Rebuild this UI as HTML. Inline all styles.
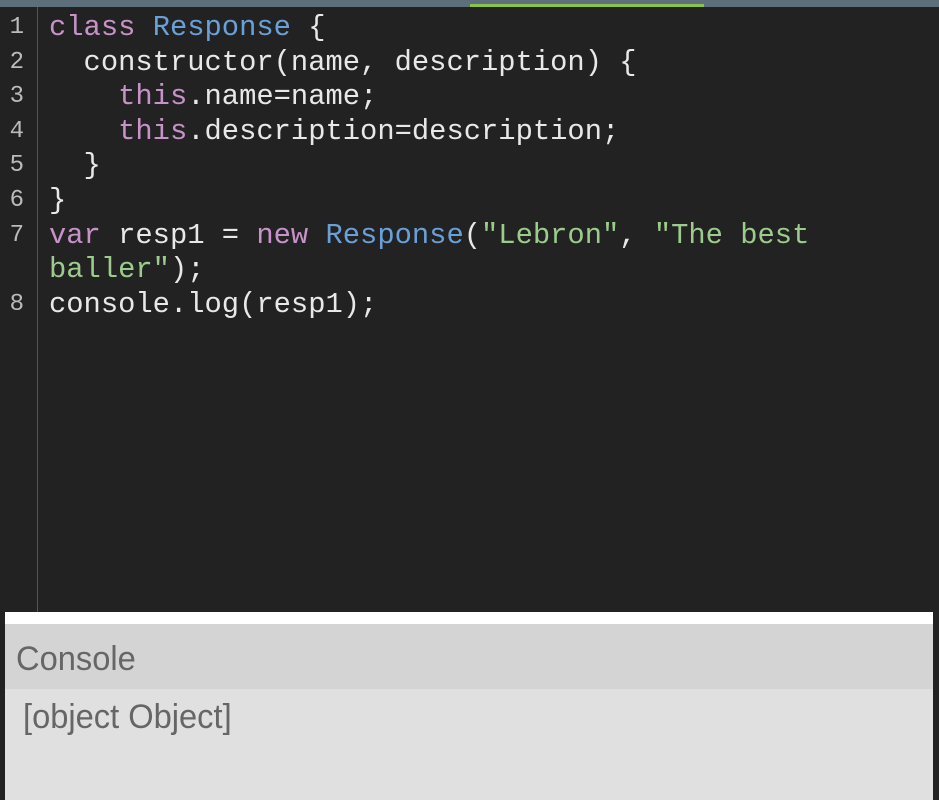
<!DOCTYPE html>
<html><head><style>
html,body{margin:0;padding:0;width:939px;height:800px;overflow:hidden;background:#222222;}
.top{position:absolute;left:0;top:0;width:939px;height:7px;background:#5c6f7a;}
.grn{position:absolute;left:470px;top:4px;width:234px;height:3px;background:#8bc34a;}
.gut{position:absolute;left:37px;top:7px;width:1px;height:606px;background:#555;}
.code{position:absolute;left:0;top:11px;font-family:"Liberation Mono","DejaVu Sans Mono",monospace;font-size:28.8px;line-height:34.6px;color:#e8e8e8;white-space:pre;}
.ln{position:absolute;left:0;width:24px;text-align:right;color:#bbb;font-size:24px;}
.tx{position:absolute;left:49px;}
.k{color:#c792c8}.c{color:#6aa0d8}.s{color:#9ccc8c}
.con{position:absolute;left:5px;top:612px;width:928px;height:188px;background:#e0e0e0;}
.wb{height:12px;background:#fff;}
.hd{height:65px;background:#d4d4d4;font-family:"Liberation Sans Narrow","Liberation Sans",sans-serif;font-size:34px;color:#666;line-height:70px;padding-left:11px;}
.out{font-family:"Liberation Sans Narrow","Liberation Sans",sans-serif;font-size:34px;color:#666;padding-left:18px;line-height:56px;}
.hd span,.out span{display:inline-block;transform:scaleX(0.96);transform-origin:left;}
</style></head><body>
<div class="top"></div><div class="grn"></div>
<div class="gut"></div>
<div class="code">
<div class="ln" style="top:0">1</div><div class="tx" style="top:0"><span class="k">class</span> <span class="c">Response</span> {</div>
<div class="ln" style="top:34.6px">2</div><div class="tx" style="top:34.6px">  constructor(name, description) {</div>
<div class="ln" style="top:69.2px">3</div><div class="tx" style="top:69.2px">    <span class="k">this</span>.name=name;</div>
<div class="ln" style="top:103.8px">4</div><div class="tx" style="top:103.8px">    <span class="k">this</span>.description=description;</div>
<div class="ln" style="top:138.4px">5</div><div class="tx" style="top:138.4px">  }</div>
<div class="ln" style="top:173px">6</div><div class="tx" style="top:173px">}</div>
<div class="ln" style="top:207.6px">7</div><div class="tx" style="top:207.6px"><span class="k">var</span> resp1 = <span class="k">new</span> <span class="c">Response</span>(<span class="s">"Lebron"</span>, <span class="s">"The best</span></div>
<div class="tx" style="top:242.2px"><span class="s">baller"</span>);</div>
<div class="ln" style="top:276.8px">8</div><div class="tx" style="top:276.8px">console.log(resp1);</div>
</div>
<div class="con"><div class="wb"></div><div class="hd"><span>Console</span></div><div class="out"><span>[object Object]</span></div></div>
</body></html>
